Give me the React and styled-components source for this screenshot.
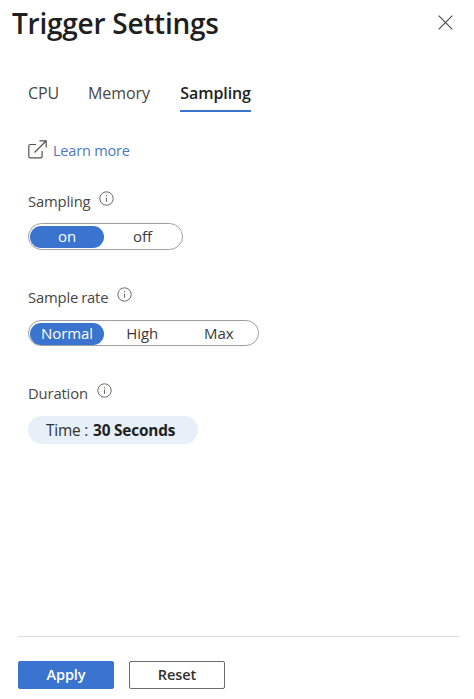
import React, { useState } from "react";
import styled, { createGlobalStyle } from "styled-components";

const GlobalStyle = createGlobalStyle`
  html, body {
    margin: 0;
    padding: 0;
    background: #ffffff;
  }
  * {
    box-sizing: border-box;
  }
  body {
    font-family: "Open Sans", "Noto Sans", sans-serif;
    color: #323130;
  }
`;

const Panel = styled.div`
  width: 474px;
  height: 699px;
  display: flex;
  flex-direction: column;
  overflow: hidden;
`;

const Header = styled.div`
  display: flex;
  justify-content: space-between;
  align-items: flex-start;
  padding: 5px 21px 0 12px;
`;

const Title = styled.h1`
  margin: 0;
  font-size: 28px;
  line-height: 36px;
  font-weight: 550;
  letter-spacing: -0.25px;
  color: #201f1e;
`;

const CloseButton = styled.button`
  border: none;
  background: none;
  padding: 0;
  margin-top: 10px;
  width: 15px;
  height: 15px;
  display: block;
  cursor: pointer;
  color: #484644;
`;

const Body = styled.div`
  padding: 0 28px;
  flex: 1;
`;

const Tabs = styled.div`
  display: flex;
  gap: 29px;
  margin-top: 40px;
`;

const Tab = styled.div`
  font-size: 16px;
  line-height: 22px;
  height: 31px;
  padding-top: 1px;
  margin-left: ${(p) => (p.$active ? "1.5px" : "0")};
  letter-spacing: -0.1px;
  font-weight: ${(p) => (p.$active ? 600 : 400)};
  color: ${(p) => (p.$active ? "#201f1e" : "#484644")};
  border-bottom: ${(p) => (p.$active ? "2px solid #3a74cf" : "2px solid transparent")};
`;

const LearnMore = styled.a`
  display: flex;
  align-items: center;
  gap: 6px;
  margin-top: 27px;
  height: 20px;
  font-size: 14.5px;
  letter-spacing: -0.2px;
  color: #4f79c9;
  text-decoration: none;
`;

const LinkText = styled.span`
  padding-top: 2px;
`;

const Section = styled.div`
  margin-top: ${(p) => p.$top}px;
`;

const LabelRow = styled.div`
  display: flex;
  align-items: flex-start;
  gap: ${(p) => p.$gap}px;
  height: 20px;
  font-size: 14.8px;
  line-height: 17px;
  letter-spacing: -0.15px;
  word-spacing: -0.8px;
  color: #484644;
`;

const InfoIcon = styled.svg`
  width: 15px;
  height: 15px;
  margin-top: -2px;
  color: #6b6966;
`;

const Pill = styled.div`
  display: grid;
  grid-template-columns: 74px repeat(${(p) => p.$count - 1}, 1fr);
  width: ${(p) => p.$width}px;
  height: ${(p) => p.$height}px;
  margin-top: ${(p) => p.$top}px;
  padding: 2px 1px;
  border: 1px solid #a19f9d;
  border-radius: 14px;
`;

const PillOption = styled.div`
  display: flex;
  align-items: center;
  justify-content: center;
  padding-bottom: 2px;
  border-radius: 11px;
  font-size: 15px;
  letter-spacing: -0.1px;
  background: ${(p) => (p.$active ? "#3a74cf" : "transparent")};
  color: ${(p) => (p.$active ? "#ffffff" : "#3b3a39")};
  cursor: pointer;
`;

const TimeChip = styled.div`
  display: flex;
  align-items: center;
  gap: 5px;
  width: 170px;
  height: 28px;
  margin-top: 11px;
  padding-left: 18px;
  border-radius: 14px;
  background: #e7eff9;
  font-size: 15.4px;
  letter-spacing: -0.2px;
  color: #323130;
`;

const TimeValue = styled.span`
  font-weight: 700;
  color: #201f1e;
`;

const Footer = styled.div`
  margin: 0 15px 10px 18px;
  padding-top: 24px;
  border-top: 1px solid #dedddc;
  display: flex;
  gap: 15px;
`;

const Button = styled.button`
  width: 96px;
  height: 28px;
  padding: 0 0 2px;
  border-radius: 2px;
  font-family: inherit;
  font-size: 14.5px;
  font-weight: 600;
  letter-spacing: -0.1px;
  cursor: pointer;
  border: 1px solid ${(p) => (p.$primary ? "#3a74cf" : "#6e6c6a")};
  background: ${(p) => (p.$primary ? "#3a74cf" : "#ffffff")};
  color: ${(p) => (p.$primary ? "#ffffff" : "#323130")};
`;

const Info = () => (
  <InfoIcon viewBox="0 0 15 15" fill="none" stroke="currentColor">
    <circle cx="7.5" cy="7.5" r="6.7" strokeWidth="1" />
    <path d="M7.5 6.6v4.2" strokeWidth="1" />
    <path d="M7.5 4.1v1.1" strokeWidth="1.1" />
  </InfoIcon>
);

const Segmented = ({ options, width, height, top }) => {
  const [selected, setSelected] = useState(options[0]);
  return (
    <Pill $count={options.length} $width={width} $height={height} $top={top}>
      {options.map((o) => (
        <PillOption key={o} $active={o === selected} onClick={() => setSelected(o)}>
          {o}
        </PillOption>
      ))}
    </Pill>
  );
};

export default function App() {
  return (
    <>
      <GlobalStyle />
      <Panel>
        <Header>
          <Title>Trigger Settings</Title>
          <CloseButton aria-label="Close">
            <svg width="15" height="15" viewBox="0 0 15 15" fill="none" stroke="currentColor" strokeWidth="1.1">
              <path d="M.7 .7l13.6 13.6M14.3 .7L.7 14.3" />
            </svg>
          </CloseButton>
        </Header>
        <Body>
          <Tabs>
            <Tab>CPU</Tab>
            <Tab>Memory</Tab>
            <Tab $active>Sampling</Tab>
          </Tabs>
          <LearnMore href="#">
            <svg width="19" height="19" viewBox="0 0 19 19" fill="none" stroke="#55534f" strokeWidth="1.2">
              <path d="M8 4.5H2.2a1.4 1.4 0 0 0-1.4 1.4v10.5a1.4 1.4 0 0 0 1.4 1.4h10.5a1.4 1.4 0 0 0 1.4-1.4v-5.4" />
              <path d="M6.5 12.5L18 1M11.5 .9H18.2V7.5" />
            </svg>
            <LinkText>Learn more</LinkText>
          </LearnMore>
          <Section $top={34}>
            <LabelRow $gap={9}>
              Sampling
              <Info />
            </LabelRow>
            <Segmented options={["on", "off"]} width={155} height={27} top={10} />
          </Section>
          <Section $top={39}>
            <LabelRow $gap={9}>
              Sample rate
              <Info />
            </LabelRow>
            <Segmented options={["Normal", "High", "Max"]} width={231} height={26} top={11} />
          </Section>
          <Section $top={39}>
            <LabelRow $gap={9}>
              Duration
              <Info />
            </LabelRow>
            <TimeChip>
              Time : <TimeValue>30 Seconds</TimeValue>
            </TimeChip>
          </Section>
        </Body>
        <Footer>
          <Button $primary>Apply</Button>
          <Button>Reset</Button>
        </Footer>
      </Panel>
    </>
  );
}
